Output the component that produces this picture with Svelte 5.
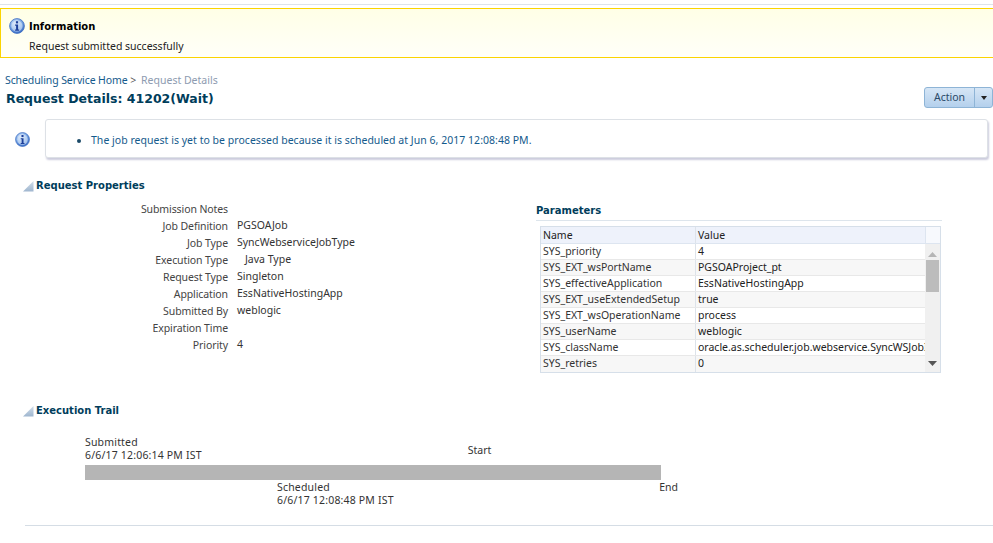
<script>
  const props = [
    ['Submission Notes', ''],
    ['Job Definition', 'PGSOAJob'],
    ['Job Type', 'SyncWebserviceJobType'],
    ['Execution Type', 'Java Type'],
    ['Request Type', 'Singleton'],
    ['Application', 'EssNativeHostingApp'],
    ['Submitted By', 'weblogic'],
    ['Expiration Time', ''],
    ['Priority', '4']
  ];
  const params = [
    ['SYS_priority', '4'],
    ['SYS_EXT_wsPortName', 'PGSOAProject_pt'],
    ['SYS_effectiveApplication', 'EssNativeHostingApp'],
    ['SYS_EXT_useExtendedSetup', 'true'],
    ['SYS_EXT_wsOperationName', 'process'],
    ['SYS_userName', 'weblogic'],
    ['SYS_className', 'oracle.as.scheduler.job.webservice.SyncWSJobImpl'],
    ['SYS_retries', '0']
  ];
</script>

{#snippet info(size)}
  <svg class="info" width={size} height={size} viewBox="0 0 16 16">
    <defs>
      <radialGradient id="ig{size}" cx="40%" cy="30%" r="75%">
        <stop offset="0" stop-color="#d5e6fb" />
        <stop offset="0.55" stop-color="#7ba8e6" />
        <stop offset="1" stop-color="#2f62c0" />
      </radialGradient>
    </defs>
    <circle cx="8" cy="8" r="7.4" fill="url(#ig{size})" stroke="#3f6fc2" stroke-width="0.8" />
    <circle cx="8" cy="8" r="5.6" fill="#e8f1fc" opacity="0.55" />
    <rect x="6.9" y="3.2" width="2.2" height="2.2" fill="#1c3f9a" />
    <path d="M6.1 6.6h3v5h1v1.1H6.1v-1.1h1v-3.9h-1z" fill="#1c3f9a" />
  </svg>
{/snippet}

{#snippet disclose()}
  <svg class="tri" width="11" height="11" viewBox="0 0 11 11">
    <defs>
      <linearGradient id="trig" x1="0" y1="0" x2="0" y2="1">
        <stop offset="0" stop-color="#d2deea" />
        <stop offset="1" stop-color="#9fb6cf" />
      </linearGradient>
    </defs>
    <path d="M0 10.5 10.5 0v10.5z" fill="url(#trig)" />
  </svg>
{/snippet}

<div class="page">
  <div class="topline"></div>
  <div class="banner">
    <div class="btitle">{@render info(16)}<b>Information</b></div>
    <div class="bmsg">Request submitted successfully</div>
  </div>

  <div class="crumbs"><span class="c1">Scheduling Service Home</span> <span class="sep">&gt;</span> <span class="c2">Request Details</span></div>

  <div class="head">
    <h1>Request Details: 41202(Wait)</h1>
    <div class="action"><span class="alabel">Action</span><span class="acaret"><i></i></span></div>
  </div>

  <div class="notice">
    <div class="nicon">{@render info(15)}</div>
    <div class="nbox"><ul><li>The job request is yet to be processed because it is scheduled at Jun 6, 2017 12:08:48 PM.</li></ul></div>
  </div>

  <div class="sechead first">{@render disclose()}<h2>Request Properties</h2></div>

  <div class="columns">
    <div class="form">
      {#each props as [k, v], i}
        <div class="frow">
          <span class="k">{k}</span>
          <span class="v" class:indent={i === 3}>{v}</span>
        </div>
      {/each}
    </div>
    <div class="paramcol">
      <h3>Parameters</h3>
      <div class="table">
        <div class="thead">
          <div class="th n">Name</div>
          <div class="th val">Value</div>
          <div class="th sbh"></div>
        </div>
        <div class="tbody">
          <div class="rows">
            {#each params as [n, v], i}
              <div class="tr" class:alt={i % 2 === 1}>
                <div class="td n">{n}</div>
                <div class="td val">{v}</div>
              </div>
            {/each}
          </div>
          <div class="sb">
            <svg class="arrow" width="9" height="5" viewBox="0 0 9 5"><path d="M4.5 0 9 5H0z" fill="#b5b5b5" /></svg>
            <div class="thumb"></div>
            <div class="sbfill"></div>
            <svg class="arrow" width="9" height="5" viewBox="0 0 9 5"><path d="M0 0h9L4.5 5z" fill="#555" /></svg>
          </div>
        </div>
      </div>
    </div>
  </div>

  <div class="sechead trail">{@render disclose()}<h2>Execution Trail</h2></div>

  <div class="trailbox">
    <div class="upper">
      <div class="lbl date">Submitted<br />6/6/17 12:06:14 PM IST</div>
      <div class="lbl start">Start</div>
    </div>
    <div class="barrow"><div class="bar"></div></div>
    <div class="lower">
      <div class="lbl sched date">Scheduled<br />6/6/17 12:08:48 PM IST</div>
      <div class="lbl end">End</div>
    </div>
  </div>
  <div class="rule"></div>
</div>

<style>
  :global(body) { margin: 0; background: #fff; }
  .page {
    width: 993px; height: 543px; overflow: hidden; box-sizing: border-box;
    font-family: "Noto Sans", "DejaVu Sans", sans-serif; font-size: 10.5px; color: #333;
  }
  .topline { height: 1px; margin-top: 4px; margin-bottom: 3px; background: #dde3ea; }
  .banner {
    height: 50px; box-sizing: border-box; border-top: 1px solid #fbd400; border-bottom: 1px solid #fbd400;
    border-left: 1px solid #fbd400;
    background: linear-gradient(#ffffe6, #fffff9);
    padding: 9px 0 0 8px; color: #000;
  }
  .btitle { display: flex; align-items: center; gap: 4px; height: 16px; font-family: "DejaVu Sans", sans-serif; font-size: 10px; }
  .btitle b { font-weight: 700; }
  .bmsg { margin: 5px 0 0 20px; line-height: 14px; color: #222; }
  .info { display: block; flex: none; }
  .crumbs { margin: 15px 0 0 5px; line-height: 14px; color: #145a8c; }
  .c1 { letter-spacing: -0.1px; }
  .c2 { color: #8d9bb0; margin-left: 2px; }
  .sep { color: #555; }
  .head { display: flex; justify-content: space-between; align-items: flex-start; margin-top: 0; padding-left: 6px; height: 24px; }
  h1 { margin: 3px 0 0; font-family: "DejaVu Sans", sans-serif; font-size: 12.5px; line-height: 17px; font-weight: 700; color: #003d5b; }
  .action {
    display: flex; height: 21px; width: 69px; margin: 0; box-sizing: border-box;
    border: 1px solid #8eb4d6; border-radius: 3px; background: linear-gradient(#d6e6f6, #b4d0ec); color: #2b4a68;
  }
  .alabel { flex: 1; text-align: center; line-height: 19px; }
  .acaret { width: 17px; border-left: 1px solid #8eb4d6; display: flex; align-items: center; justify-content: center; }
  .acaret i { width: 0; height: 0; border: 3.5px solid transparent; border-top: 4px solid #222; border-bottom: 0; }
  .notice { display: flex; margin-top: 8px; height: 39px; }
  .nicon { width: 45px; padding: 13px 0 0 15px; box-sizing: border-box; }
  .nbox {
    width: 943px; box-sizing: border-box; border: 1px solid #dde1e6; border-radius: 3px; background: #fff;
    box-shadow: 1px 2px 2px #ccd; color: #145a8c; letter-spacing: 0.03px;
  }
  ul { margin: 13px 0 0; padding: 0 0 0 45px; line-height: 14px; }
  li::marker { color: #1b4a68; }
  .sechead { display: flex; align-items: center; gap: 2px; padding-left: 23px; height: 14px; }
  .sechead.first { margin-top: 21px; }
  h2 { margin: 0; font-family: "DejaVu Sans", sans-serif; font-size: 10px; line-height: 14px; font-weight: 700; color: #003d5b; }
  .columns { display: flex; height: 211px; }
  .form { width: 536px; padding-top: 9px; box-sizing: border-box; }
  .frow { display: flex; height: 17px; line-height: 15px; }
  .k { width: 228px; text-align: right; color: #444; letter-spacing: -0.1px; }
  .v { margin-left: 9px; color: #333; margin-top: -1px; }
  .v.indent { margin-left: 17px; }
  .paramcol { width: 406px; padding-top: 11px; box-sizing: border-box; }
  h3 {
    margin: 0; height: 16px; font-family: "DejaVu Sans", sans-serif; font-size: 10px; line-height: 14px;
    font-weight: 700; color: #003d5b; border-bottom: 1px solid #dde5ec;
  }
  .table { margin: 5px 0 0 4px; width: 401px; box-sizing: border-box; border: 1px solid #d6dfe9; }
  .thead { display: flex; height: 17px; box-sizing: border-box; border-bottom: 1px solid #dde5f0; }
  .th { background: #eef2fb; color: #222; line-height: 16px; }
  .th.sbh { flex: 1; background: #f7f9fd; border-left: 1px solid #dde5f0; }
  .n { width: 155px; flex: none; box-sizing: border-box; padding-left: 2px; border-right: 1px solid #dde3ea; }
  .val { width: 229px; flex: none; box-sizing: border-box; padding-left: 2px; white-space: nowrap; overflow: hidden; }
  .tbody { display: flex; }
  .tr { display: flex; height: 16px; box-sizing: border-box; border-bottom: 1px solid #e8e8e8; line-height: 15px; color: #222; }
  .tr:last-child { border-bottom: 0; }
  .tr.alt { background: #f7f7f7; }
  .td.n { color: #333; }
  .rows { width: 384px; }
  .sb { flex: 1; background: #f0f0f0; display: flex; flex-direction: column; align-items: center; padding: 8px 0 6px; box-sizing: border-box; }
  .thumb { width: 13px; height: 32px; margin-top: 3px; background: #bcbcbc; }
  .sbfill { flex: 1; }
  .arrow { display: block; flex: none; }
  .trailbox { padding: 18px 0 0 85px; }
  .lbl { line-height: 13px; color: #333; }
  .date { letter-spacing: 0.18px; }
  .upper { display: flex; height: 29px; }
  .start { margin: 8px 0 0 266px; letter-spacing: 0; }
  .barrow { height: 15px; }
  .bar { width: 576px; height: 15px; background: #b5b5b5; }
  .lower { display: flex; justify-content: space-between; width: 593px; }
  .sched { margin: 1px 0 0 192px; }
  .end { margin-top: 1px; }
  .rule { margin: 18px 0 0 25px; height: 1px; background: #d5dde5; }
</style>
